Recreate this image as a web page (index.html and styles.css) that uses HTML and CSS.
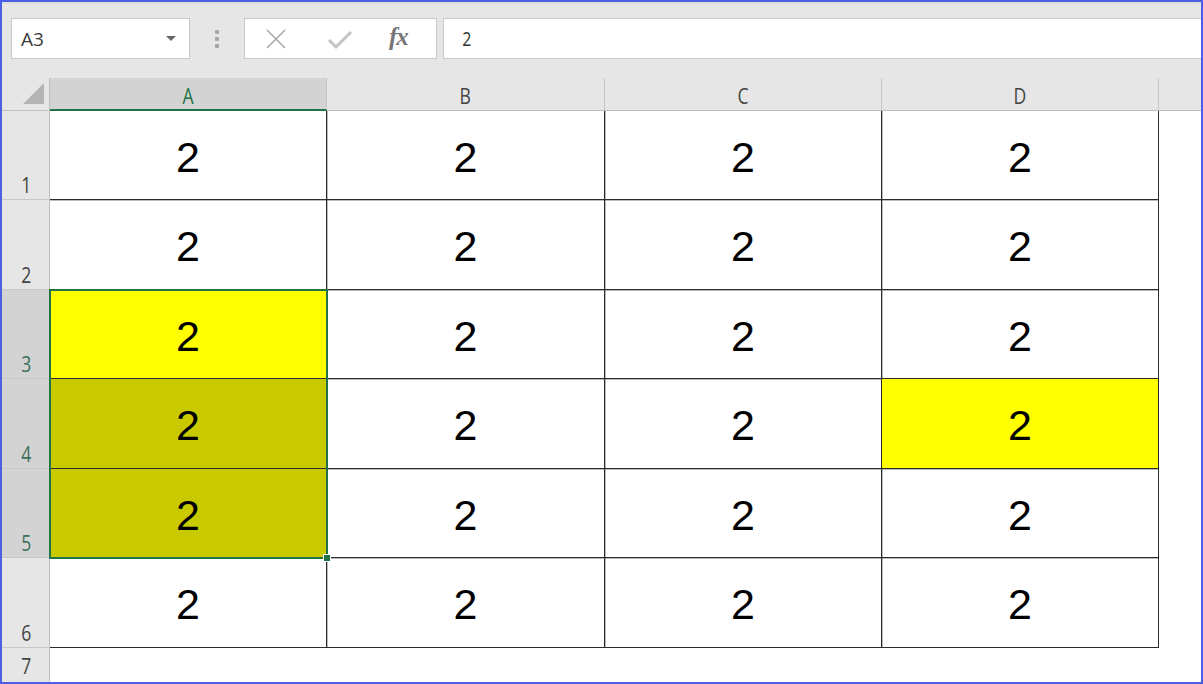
FILE: index.html
```html
<!DOCTYPE html>
<html>
<head>
<meta charset="utf-8">
<link rel="stylesheet" href="styles.css">
</head>
<body>
<div class="frame">
  <div class="toolbar">
    <div class="namebox">
      <span class="name">A3</span>
      <span class="caret"></span>
    </div>
    <div class="grip"><i></i><i></i><i></i></div>
    <div class="fxbox">
      <svg class="ic-x" width="22" height="22" viewBox="0 0 22 22"><path d="M2 2 L20 20 M20 2 L2 20" stroke="#a9a9a9" stroke-width="1.6" fill="none"/></svg>
      <svg class="ic-check" width="26" height="22" viewBox="0 0 26 22"><path d="M2 11 L9 18 L24 3" stroke="#c3c3c3" stroke-width="3" fill="none"/></svg>
      <span class="fx">fx</span>
    </div>
    <div class="formula"><span class="narrow">2</span></div>
  </div>
  <div class="sheet">
    <div class="corner"><span class="tri"></span></div>
    <div class="colhead sel"><span class="narrow">A</span></div>
    <div class="colhead"><span class="narrow">B</span></div>
    <div class="colhead"><span class="narrow">C</span></div>
    <div class="colhead"><span class="narrow">D</span></div>
    <div class="colhead rest"></div>

    <div class="rowhead"><span class="narrow">1</span></div>
    <div class="cell">2</div><div class="cell">2</div><div class="cell">2</div><div class="cell">2</div><div class="blank"></div>

    <div class="rowhead"><span class="narrow">2</span></div>
    <div class="cell">2</div><div class="cell">2</div><div class="cell">2</div><div class="cell">2</div><div class="blank"></div>

    <div class="rowhead sel"><span class="narrow">3</span></div>
    <div class="cell yellow">2</div><div class="cell">2</div><div class="cell">2</div><div class="cell">2</div><div class="blank"></div>

    <div class="rowhead sel"><span class="narrow">4</span></div>
    <div class="cell olive">2</div><div class="cell">2</div><div class="cell">2</div><div class="cell yellow">2</div><div class="blank"></div>

    <div class="rowhead sel"><span class="narrow">5</span></div>
    <div class="cell olive">2</div><div class="cell">2</div><div class="cell">2</div><div class="cell">2</div><div class="blank"></div>

    <div class="rowhead"><span class="narrow">6</span></div>
    <div class="cell">2</div><div class="cell">2</div><div class="cell">2</div><div class="cell">2</div><div class="blank"></div>

    <div class="rowhead last"><span class="narrow">7</span></div>
    <div class="blank wide"></div>

    <div class="selection"><span class="handle"></span></div>
  </div>
</div>
</body>
</html>
```

FILE: styles.css
```css
html, body {
  margin: 0;
  padding: 0;
  background: #fff;
}

.frame {
  width: 1203px;
  height: 684px;
  box-sizing: border-box;
  border: 2px solid #4b5fe6;
  background: #e6e6e6;
  display: flex;
  flex-direction: column;
  overflow: hidden;
  font-family: "Open Sans", "Noto Sans", sans-serif;
}

.narrow {
  display: inline-block;
  transform: scaleX(0.8);
}

/* ---------- toolbar ---------- */
.toolbar {
  height: 76px;
  flex: none;
  box-sizing: border-box;
  padding: 16px 0 0 9px;
  display: flex;
  align-items: flex-start;
  background: linear-gradient(#dcdcdc 0, #e6e6e6 3px);
}

.namebox {
  width: 179px;
  height: 41px;
  box-sizing: border-box;
  background: #fff;
  border: 1px solid #c9c9c9;
  display: flex;
  align-items: center;
  justify-content: space-between;
  padding: 0 13px 0 9px;
}

.name {
  font-size: 19px;
  color: #3a3a3a;
}

.caret {
  width: 0;
  height: 0;
  border-left: 5px solid transparent;
  border-right: 5px solid transparent;
  border-top: 5px solid #666;
}

.grip {
  width: 54px;
  height: 41px;
  display: flex;
  flex-direction: column;
  align-items: center;
  justify-content: center;
  gap: 3px;
}

.grip i {
  display: block;
  width: 4px;
  height: 4px;
  background: #a5a5a5;
  border-radius: 1px;
}

.fxbox {
  width: 193px;
  height: 41px;
  box-sizing: border-box;
  background: #fff;
  border: 1px solid #c9c9c9;
  display: flex;
  align-items: center;
  padding-left: 20px;
}

.ic-x {
  margin-right: 40px;
}

.ic-check {
  margin-right: 36px;
  margin-top: 2px;
}

.fx {
  font-family: "Liberation Serif", "DejaVu Serif", serif;
  font-style: italic;
  font-weight: bold;
  font-size: 25px;
  color: #767676;
  letter-spacing: -1px;
  margin-top: -4px;
}

.formula {
  flex: 1;
  margin-left: 6px;
  height: 41px;
  box-sizing: border-box;
  background: #fff;
  border: 1px solid #c9c9c9;
  border-right: none;
  padding-left: 17px;
  font-size: 20px;
  line-height: 39px;
  color: #333;
}

/* ---------- sheet ---------- */
.sheet {
  flex: 1;
  display: grid;
  grid-template-columns: 48px 277px 278px 277px 277px 1fr;
  grid-template-rows: 33px 89px 90px 89px 90px 89px 90px 1fr;
  background: #fff;
  position: relative;
}

.corner {
  background: #e6e6e6;
  border-right: 1px solid #bfbfbf;
  border-bottom: 1px solid #bfbfbf;
  box-sizing: border-box;
  position: relative;
}

.tri {
  position: absolute;
  right: 5px;
  bottom: 6px;
  width: 0;
  height: 0;
  border-left: 21px solid transparent;
  border-bottom: 21px solid #b5b5b5;
}

.colhead {
  background: #e6e6e6;
  box-sizing: border-box;
  border-right: 1px solid #c6c6c6;
  border-bottom: 1px solid #bdbdbd;
  display: flex;
  align-items: center;
  justify-content: center;
  font-size: 22px;
  line-height: 24px;
  color: #444;
  padding-top: 1px;
}

.colhead.sel {
  background: #d3d3d3;
  color: #217346;
  border-bottom: 2px solid #217346;
  padding-top: 2px;
}

.colhead.rest {
  border-right: none;
}

.rowhead {
  background: #e6e6e6;
  box-sizing: border-box;
  border-right: 1px solid #bfbfbf;
  border-bottom: 1px solid #c8c8c8;
  display: flex;
  align-items: flex-end;
  justify-content: center;
  font-size: 22px;
  line-height: 24px;
  color: #444;
  padding-bottom: 3px;
  padding-left: 1px;
}

.rowhead.sel {
  background: #d3d3d3;
  color: #3c6f5b;
}

.rowhead.last {
  align-items: center;
  padding-bottom: 1px;
  border-bottom: none;
}

.cell {
  box-sizing: border-box;
  border-right: 1px solid #2b2b2b;
  border-bottom: 1px solid #2b2b2b;
  box-shadow: 1px 0 0 rgba(60, 60, 60, 0.35), 0 1px 0 rgba(60, 60, 60, 0.35);
  display: flex;
  align-items: center;
  justify-content: center;
  font-family: "Liberation Sans", Arial, sans-serif;
  font-size: 43px;
  color: #000;
  padding-top: 4px;
}

.cell.yellow {
  background: #ffff00;
}

.cell.olive {
  background: #c9c900;
}

.blank {
  background: #fff;
}

.blank.wide {
  grid-column: 2 / -1;
}

.selection {
  position: absolute;
  grid-column: 2 / 3;
  grid-row: 4 / 7;
  top: -1px;
  left: -1px;
  right: -1px;
  bottom: -1px;
  border: 2px solid #217346;
  z-index: 2;
  pointer-events: none;
}

.handle {
  position: absolute;
  right: -5px;
  bottom: -5px;
  width: 6px;
  height: 6px;
  background: #217346;
  border: 1px solid #fff;
}
```
